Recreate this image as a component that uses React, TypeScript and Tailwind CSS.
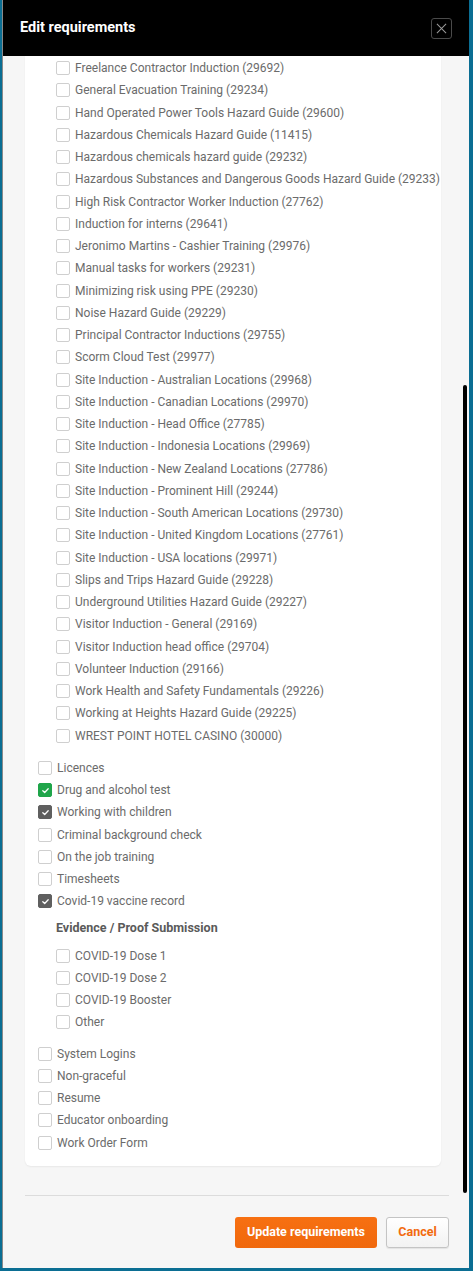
import React from "react";

const subItems = [
  "Freelance Contractor Induction (29692)",
  "General Evacuation Training (29234)",
  "Hand Operated Power Tools Hazard Guide (29600)",
  "Hazardous Chemicals Hazard Guide (11415)",
  "Hazardous chemicals hazard guide (29232)",
  "Hazardous Substances and Dangerous Goods Hazard Guide (29233)",
  "High Risk Contractor Worker Induction (27762)",
  "Induction for interns (29641)",
  "Jeronimo Martins - Cashier Training (29976)",
  "Manual tasks for workers (29231)",
  "Minimizing risk using PPE (29230)",
  "Noise Hazard Guide (29229)",
  "Principal Contractor Inductions (29755)",
  "Scorm Cloud Test (29977)",
  "Site Induction - Australian Locations (29968)",
  "Site Induction - Canadian Locations (29970)",
  "Site Induction - Head Office (27785)",
  "Site Induction - Indonesia Locations (29969)",
  "Site Induction - New Zealand Locations (27786)",
  "Site Induction - Prominent Hill (29244)",
  "Site Induction - South American Locations (29730)",
  "Site Induction - United Kingdom Locations (27761)",
  "Site Induction - USA locations (29971)",
  "Slips and Trips Hazard Guide (29228)",
  "Underground Utilities Hazard Guide (29227)",
  "Visitor Induction - General (29169)",
  "Visitor Induction head office (29704)",
  "Volunteer Induction (29166)",
  "Work Health and Safety Fundamentals (29226)",
  "Working at Heights Hazard Guide (29225)",
  "WREST POINT HOTEL CASINO (30000)",
];

type State = "none" | "green" | "gray";

const topItems: { label: string; state: State }[] = [
  { label: "Licences", state: "none" },
  { label: "Drug and alcohol test", state: "green" },
  { label: "Working with children", state: "gray" },
  { label: "Criminal background check", state: "none" },
  { label: "On the job training", state: "none" },
  { label: "Timesheets", state: "none" },
  { label: "Covid-19 vaccine record", state: "gray" },
];

const evidence = ["COVID-19 Dose 1", "COVID-19 Dose 2", "COVID-19 Booster", "Other"];
const bottomItems = ["System Logins", "Non-graceful", "Resume", "Educator onboarding", "Work Order Form"];

function Box({ state }: { state: State }) {
  if (state === "none") {
    return <span className="w-[14px] h-[14px] shrink-0 rounded-[2px] border border-[#cfcfcf] bg-white" />;
  }
  const bg = state === "green" ? "bg-[#1fa54a] border-[#1fa54a]" : "bg-[#5f5f5f] border-[#5f5f5f]";
  return (
    <span className={`w-[14px] h-[14px] shrink-0 rounded-[2px] border flex items-center justify-center ${bg}`}>
      <svg width="9" height="9" viewBox="0 0 10 10" fill="none">
        <path d="M2 5.2 L4.1 7.2 L8 3" stroke="white" strokeWidth="1.4" strokeLinecap="round" strokeLinejoin="round" />
      </svg>
    </span>
  );
}

function Row({ label, state = "none" }: { label: string; state?: State }) {
  return (
    <div className="h-[22.25px] flex items-center gap-[5px]">
      <Box state={state} />
      <span className="text-[12px] text-[#6b6b6b] leading-none whitespace-nowrap">{label}</span>
    </div>
  );
}

export default function App() {
  return (
    <div
      className="w-[473px] h-[1271px] bg-[#0b6e93] overflow-hidden"
      style={{ fontFamily: "Roboto, 'Liberation Sans', sans-serif" }}
    >
      <div className="ml-[2px] w-[467px] h-[1268px] flex flex-col bg-[#f6f6f6] border-l border-[#8a8a8a] relative">
        <div className="h-[56px] bg-black flex items-center justify-between pl-[17px] pr-[17px] shrink-0">
          <span className="text-white font-bold text-[14.5px]">Edit requirements</span>
          <button className="w-[21px] h-[21px] rounded-[3px] border border-[#4a4a4a] flex items-center justify-center">
            <svg width="11" height="11" viewBox="0 0 12 12">
              <path d="M1 1 L11 11 M11 1 L1 11" stroke="#9a9a9a" strokeWidth="1.1" />
            </svg>
          </button>
        </div>

        <div className="flex-1 relative overflow-hidden">
          <div className="ml-[22px] w-[416px] bg-white rounded-b-[6px] shadow-[0_1px_2px_rgba(0,0,0,0.06)] pl-[13px] pb-[12px] pt-[1px]">
            <div className="pl-[18px] mb-[10px]">
              {subItems.map((s) => (
                <Row key={s} label={s} />
              ))}
            </div>
            {topItems.map((t) => (
              <Row key={t.label} label={t.label} state={t.state} />
            ))}
            <div className="pl-[18px] mb-[9px]">
              <div className="h-[32px] flex items-center text-[12.5px] font-bold text-[#5a5a5a]">Evidence / Proof Submission</div>
              {evidence.map((e) => (
                <Row key={e} label={e} />
              ))}
            </div>
            {bottomItems.map((b) => (
              <Row key={b} label={b} />
            ))}
          </div>
          <div className="absolute right-[2px] top-[329px] w-[4px] h-[808px] bg-black rounded-[2px]" />
        </div>

        <div className="shrink-0 mx-[22px] border-t border-[#dcdcdc] h-[73px] flex items-start justify-end gap-[9px] pt-[21px] mr-[20px]">
          <button className="h-[31px] px-[12px] rounded-[3px] bg-gradient-to-b from-[#f77012] to-[#f0680c] text-white font-bold text-[12.5px]">
            Update requirements
          </button>
          <button className="h-[31px] w-[63px] rounded-[3px] border border-[#c4c4c4] bg-gradient-to-b from-white to-[#f2f2f2] text-[#f26b0f] font-bold text-[12.5px] shadow-[0_1px_1px_rgba(0,0,0,0.08)]">
            Cancel
          </button>
        </div>
      </div>
    </div>
  );
}
